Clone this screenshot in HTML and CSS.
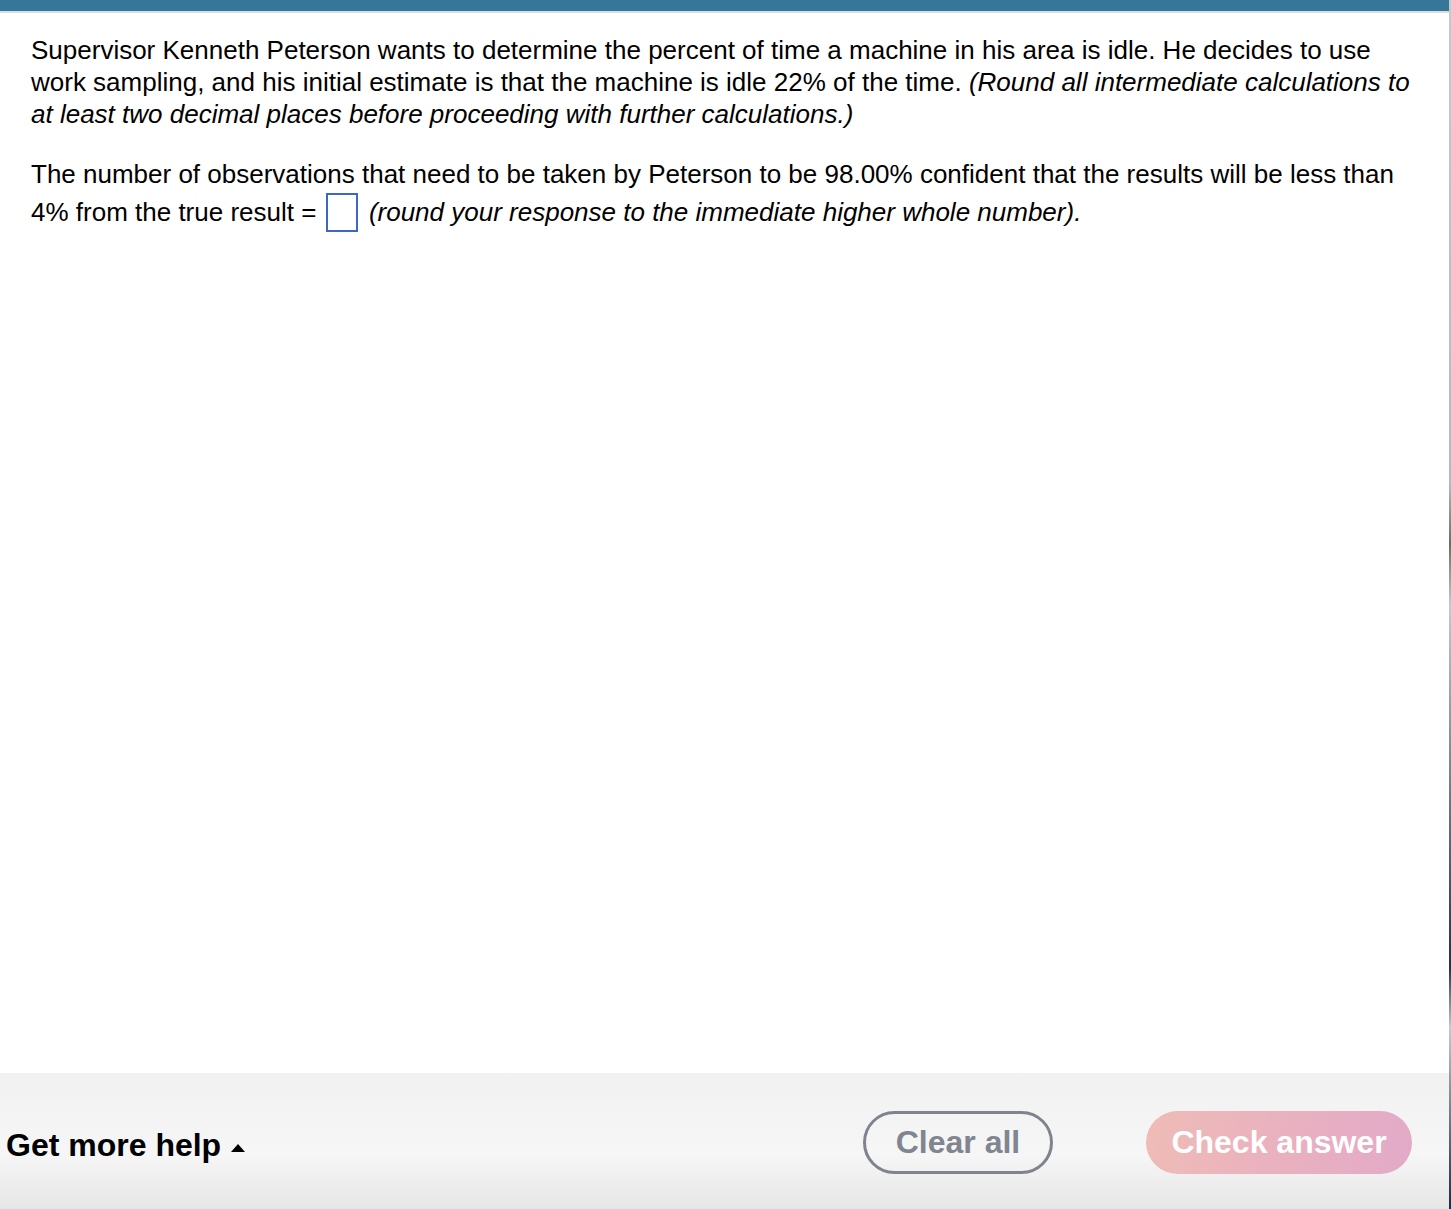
FILE: index.html
```html
<!DOCTYPE html>
<html>
<head>
<meta charset="utf-8">
<link rel="stylesheet" href="styles.css">
</head>
<body>
<div class="frame">
  <div class="topbar"></div>
  <div class="content">
    <p class="para">Supervisor Kenneth Peterson wants to determine the percent of time a machine in his area is idle. He decides to use work sampling, and his initial estimate is that the machine is idle 22% of the time. <i>(Round all intermediate calculations to at least two decimal places before proceeding with further calculations.)</i></p>
    <p class="para para2">The number of observations that need to be taken by Peterson to be 98.00% confident that the results will be less than 4% from the true result = <span class="answer"></span> <i>(round your response to the immediate higher whole number).</i></p>
  </div>
  <div class="footer">
    <div class="help">Get more help <span class="caret"></span></div>
    <div class="buttons">
      <div class="btn clear">Clear all</div>
      <div class="btn check">Check answer</div>
    </div>
  </div>
</div>
<div class="edge"></div>
</body>
</html>
```
FILE: styles.css
```css
html, body {
  margin: 0;
  padding: 0;
  height: 100%;
}
body {
  width: 1451px;
  height: 1209px;
  overflow: hidden;
  background: #ffffff;
  font-family: "Liberation Sans", Arial, sans-serif;
  display: flex;
}
.frame {
  width: 1449px;
  height: 1209px;
  display: flex;
  flex-direction: column;
  background: #fff;
}
.edge {
  width: 2px;
  height: 1209px;
  background: linear-gradient(#c9c9c9, #b8b8b8 40%, #6f6a66 45%, #c8c8c8 50%, #2a2f44 80%, #c8c8c8 85%, #23283c);
}
.topbar {
  height: 11px;
  background: #367698;
  border-bottom: 2px solid #d7dfe4;
  flex: none;
}
.content {
  flex: 1;
  padding: 21px 30px 0 31px;
}
.para {
  margin: 0;
  font-size: 26px;
  line-height: 32px;
  color: #000;
  letter-spacing: 0;
}
.para2 {
  margin-top: 25px;
  line-height: 38px;
}
.para i {
  font-style: italic;
}
.answer {
  display: inline-block;
  width: 28px;
  height: 35px;
  border: 2px solid #3c66c7;
  vertical-align: -11px;
  margin-left: 2px;
  margin-right: 4px;
}
.footer {
  flex: none;
  height: 136px;
  box-sizing: border-box;
  padding: 3px 37px 0 6px;
  background: linear-gradient(#f1f1f1, #f6f6f6 60%, #e6e6e6);
  display: flex;
  align-items: center;
  justify-content: space-between;
}
.help {
  font-size: 32px;
  font-weight: bold;
  color: #000;
  display: flex;
  align-items: center;
  margin-top: 6px;
}
.caret {
  display: inline-block;
  width: 0;
  height: 0;
  border-left: 7px solid transparent;
  border-right: 7px solid transparent;
  border-bottom: 8px solid #000;
  margin-left: 10px;
  margin-top: 4px;
}
.buttons {
  display: flex;
  gap: 93px;
  align-items: center;
}
.btn {
  height: 63px;
  border-radius: 32px;
  font-size: 32px;
  font-weight: bold;
  display: flex;
  align-items: center;
  justify-content: center;
  box-sizing: border-box;
}
.clear {
  width: 190px;
  border: 3px solid #7e838e;
  color: #80858f;
  background: transparent;
}
.check {
  width: 266px;
  color: #fff;
  background: linear-gradient(100deg, #efbcb6, #e9b0c0 55%, #e2aac8);
}
```
